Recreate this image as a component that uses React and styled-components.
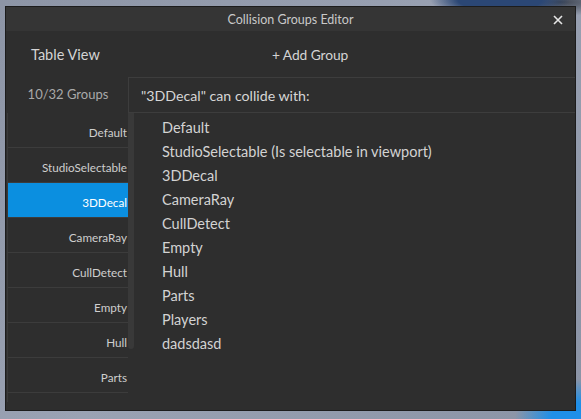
import React from "react";
import styled, { createGlobalStyle } from "styled-components";

const Global = createGlobalStyle`
  html, body { margin: 0; padding: 0; }
  body {
    width: 581px;
    height: 419px;
    overflow: hidden;
    font-family: "Lato", "Noto Sans", sans-serif;
    background:
      radial-gradient(ellipse 60px 40px at 575px 419px, #1f8fe8 0%, #1f8fe8 40%, rgba(31,143,232,0) 100%),
      radial-gradient(ellipse 70px 18px at 500px 0px, #2b4775 0%, #2b4775 60%, rgba(43,71,117,0) 100%),
      radial-gradient(ellipse 60px 14px at 560px 2px, #3c4350 0%, rgba(60,67,80,0) 100%),
      linear-gradient(135deg, #8d95a6 0%, #9aa2b3 50%, #8a93a5 100%);
  }
`;

const Window = styled.div`
  box-sizing: border-box;
  margin: 6px 0 0 5px;
  width: 571px;
  height: 405px;
  border: 1px solid #1c1c1c;
  background: #2e2e2e;
  display: flex;
  flex-direction: column;
`;

const TitleBar = styled.div`
  height: 24px;
  flex: none;
  background: #353535;
  display: flex;
  align-items: center;
  justify-content: center;
  position: relative;
  color: #c9c9c9;
  font-size: 12.5px;
`;

const Close = styled.div`
  position: absolute;
  right: 10px;
  top: 6px;
  width: 14px;
  height: 14px;
  display: flex;
  align-items: center;
  justify-content: center;
`;

const Toolbar = styled.div`
  height: 46px;
  flex: none;
  display: grid;
  grid-template-columns: 122px 1fr;
  align-items: center;
  color: #d4d4d4;
  font-size: 14.5px;
`;

const ToolLabel = styled.div`
  padding-left: 25px;
`;

const AddGroup = styled.div`
  padding-left: 144px;
  font-size: 13.8px;
  letter-spacing: -0.1px;
`;

const Main = styled.div`
  flex: 1;
  min-height: 0;
  display: grid;
  grid-template-columns: 122px 6px 1fr;
  grid-template-rows: 36px 1fr;
`;

const Count = styled.div`
  display: flex;
  align-items: center;
  justify-content: center;
  color: #a9a9a9;
  font-size: 13px;
  padding: 0 0 2px 2px;
`;

const HeaderBox = styled.div`
  grid-column: 2 / 4;
  box-sizing: border-box;
  border-top: 1px solid #3d3d3d;
  border-left: 1px solid #3d3d3d;
  border-bottom: 1px solid #3d3d3d;
  display: flex;
  align-items: center;
  padding-left: 12px;
  color: #d6d6d6;
  font-size: 14.2px;
`;

const GroupList = styled.div`
  box-sizing: border-box;
  margin-left: 1px;
  border-left: 1px solid #3a3a3a;
  height: 289px;
  overflow: hidden;
`;

const GroupRow = styled.div`
  box-sizing: border-box;
  height: 35px;
  border-bottom: 1px solid #3c3c3c;
  display: flex;
  align-items: center;
  justify-content: flex-end;
  padding: 3px 1px 0 0;
  font-size: 11.7px;
  color: ${(p) => (p.$selected ? "#ffffff" : "#cfcfcf")};
  background: ${(p) => (p.$selected ? "#0b8fe0" : "transparent")};
`;

const ScrollTrack = styled.div`
  height: 289px;
`;

const ScrollThumb = styled.div`
  width: 6px;
  height: 236px;
  background: #393939;
  border-radius: 0 0 3px 3px;
`;

const CollideList = styled.div`
  padding: 2px 0 0 28px;
  display: flex;
  flex-direction: column;
`;

const CollideItem = styled.div`
  height: 24px;
  display: flex;
  align-items: center;
  color: #d3d3d3;
  font-size: 14.5px;
`;

const visibleGroups = [
  "Default",
  "StudioSelectable",
  "3DDecal",
  "CameraRay",
  "CullDetect",
  "Empty",
  "Hull",
  "Parts",
  "",
];

const collides = [
  "Default",
  "StudioSelectable (Is selectable in viewport)",
  "3DDecal",
  "CameraRay",
  "CullDetect",
  "Empty",
  "Hull",
  "Parts",
  "Players",
  "dadsdasd",
];

export default function App() {
  return (
    <>
      <Global />
      <Window>
        <TitleBar>
          Collision Groups Editor
          <Close>
            <svg width="10" height="10" viewBox="0 0 10 10">
              <path d="M1 1 L9 9 M9 1 L1 9" stroke="#e6e6e6" strokeWidth="1.6" />
            </svg>
          </Close>
        </TitleBar>
        <Toolbar>
          <ToolLabel>Table View</ToolLabel>
          <AddGroup>+ Add Group</AddGroup>
        </Toolbar>
        <Main>
          <Count>10/32 Groups</Count>
          <HeaderBox>"3DDecal" can collide with:</HeaderBox>
          <GroupList>
            {visibleGroups.map((g, i) => (
              <GroupRow key={i} $selected={g === "3DDecal"}>
                {g}
              </GroupRow>
            ))}
          </GroupList>
          <ScrollTrack>
            <ScrollThumb />
          </ScrollTrack>
          <CollideList>
            {collides.map((c) => (
              <CollideItem key={c}>{c}</CollideItem>
            ))}
          </CollideList>
        </Main>
      </Window>
    </>
  );
}
